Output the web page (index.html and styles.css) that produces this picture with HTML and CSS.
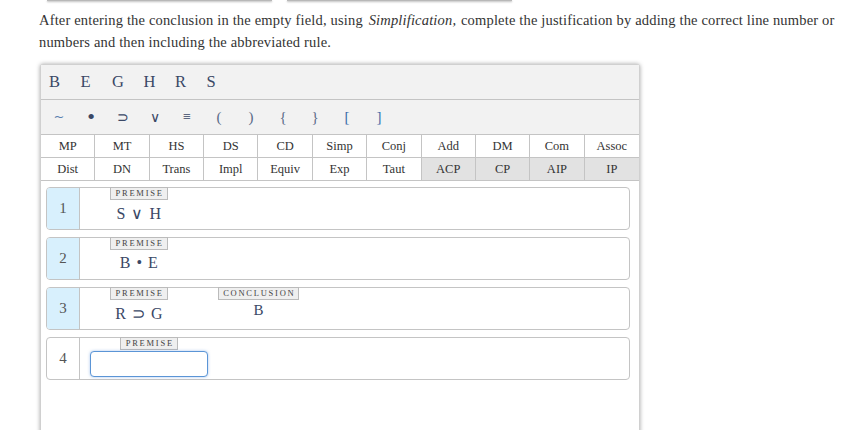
FILE: index.html
```html
<!DOCTYPE html>
<html>
<head>
<meta charset="utf-8">
<link rel="stylesheet" href="styles.css">
</head>
<body>
<div class="topbars"><div class="tb"></div><div class="tb"></div></div>
<p class="intro"><span>After entering the conclusion in the empty field, using </span><i>Simplification,</i><span> complete the justification by adding the correct line number or</span> <span>numbers and then including the abbreviated rule.</span></p>
<div class="panel">
  <div class="bar letters">
    <span>B</span><span>E</span><span>G</span><span>H</span><span>R</span><span>S</span>
  </div>
  <div class="bar symbols">
    <span class="tilde">~</span><span class="dot">•</span><span>⊃</span><span>∨</span><span>≡</span><span>(</span><span>)</span><span>{</span><span>}</span><span>[</span><span>]</span>
  </div>
  <div class="rules">
    <div>MP</div><div>MT</div><div>HS</div><div>DS</div><div>CD</div><div>Simp</div><div>Conj</div><div>Add</div><div>DM</div><div>Com</div><div>Assoc</div>
    <div>Dist</div><div>DN</div><div>Trans</div><div>Impl</div><div>Equiv</div><div>Exp</div><div>Taut</div><div class="g">ACP</div><div class="g">CP</div><div class="g">AIP</div><div class="g">IP</div>
  </div>
  <div class="lines">
    <div class="line">
      <div class="num done">1</div>
      <div class="col"><span class="tag">PREMISE</span><span class="f">S ∨ H</span></div>
    </div>
    <div class="line">
      <div class="num done">2</div>
      <div class="col"><span class="tag">PREMISE</span><span class="f">B • E</span></div>
    </div>
    <div class="line">
      <div class="num done">3</div>
      <div class="col"><span class="tag">PREMISE</span><span class="f">R ⊃ G</span></div>
      <div class="col concl"><span class="tag">CONCLUSION</span><span class="f">B</span></div>
    </div>
    <div class="line">
      <div class="num">4</div>
      <div class="col inputcol"><span class="tag">PREMISE</span><span class="input"></span></div>
    </div>
  </div>
</div>
</body>
</html>
```

FILE: styles.css
```css
html, body {
  margin: 0;
  padding: 0;
  background: #fff;
  overflow: hidden;
}
body {
  font-family: "Liberation Serif", "Times New Roman", serif;
  color: #333;
}
.topbars {
  display: flex;
  gap: 15px;
  padding-left: 47px;
  height: 2px;
}
.tb {
  width: 225px;
  height: 1px;
  background: #b8b8b8;
  box-shadow: 0 1px 2px rgba(0,0,0,0.35);
}
.intro {
  margin: 7px 0 0 39px;
  width: 800px;
  font-size: 14.5px;
  letter-spacing: 0.17px;
  line-height: 22px;
  color: #333;
}
.intro i { padding: 0 1px 0 2px; }
.panel {
  margin: 11px 0 0 40px;
  width: 598px;
  height: 420px;
  border: 1px solid #d0d0d0;
  border-radius: 3px;
  box-shadow: 0 0 4px rgba(0,0,0,0.35);
  background: #fff;
}
.bar {
  display: flex;
  align-items: center;
  background: #f2f2f2;
  border-bottom: 1px solid #c4c4c4;
  color: #3a4866;
  font-family: "Liberation Serif", serif;
}
.letters {
  height: 34px;
  font-size: 16.5px;
  padding-left: 8px;
}
.letters span {
  width: 31.5px;
}
.symbols {
  height: 34px;
  font-size: 14px;
  padding-left: 2px;
}
.symbols span {
  width: 32px;
  text-align: center;
}
.symbols .tilde { color: #5a7fb0; font-family: "DejaVu Sans", sans-serif; font-size: 13px; line-height: 20px; }
.symbols .dot { font-size: 22px; line-height: 20px; }
.symbols span:nth-child(6), .symbols span:nth-child(7),
.symbols span:nth-child(8), .symbols span:nth-child(9) { color: #5a6a88; font-size: 15px; }
.symbols span:nth-child(10), .symbols span:nth-child(11) { color: #3a6aa8; font-size: 15px; }
.rules {
  display: grid;
  grid-template-columns: repeat(11, 1fr);
  border-bottom: 1px solid #c4c4c4;
}
.rules div {
  height: 22px;
  line-height: 22px;
  text-align: center;
  font-size: 12.5px;
  color: #333;
  border-right: 1px solid #c4c4c4;
  background: #fff;
}
.rules div:nth-child(11n) { border-right: none; }
.rules div:nth-child(-n+11) { border-bottom: 1px solid #c4c4c4; }
.rules div.g { background: #e2e2e2; }
.lines {
  display: flex;
  flex-direction: column;
  gap: 7px;
  padding: 6px 9px 0 5px;
}
.line {
  display: flex;
  height: 41px;
  border: 1px solid #c4c4c4;
  border-radius: 4px;
}
.num {
  width: 32px;
  border-right: 1px solid #c4c4c4;
  display: flex;
  align-items: center;
  justify-content: center;
  font-size: 15px;
  color: #555;
  border-radius: 3px 0 0 3px;
}
.num.done { background: #d8f0fd; }
.col {
  display: flex;
  flex-direction: column;
  align-items: center;
  margin-left: 30px;
  margin-top: -1px;
}
.concl { margin-left: 50px; }
.inputcol { margin-left: 10px; }
.tag {
  display: block;
  font-size: 8.5px;
  letter-spacing: 1.75px;
  line-height: 11px;
  padding: 0 3px 0 4.5px;
  background: #efefef;
  border: 1px solid #bbb;
  color: #444;
}
.f {
  margin-top: 4px;
  font-size: 16px;
  color: #3a4866;
  word-spacing: 2px;
}
.concl .f { margin-top: 2px; font-size: 15px; }
.input {
  display: block;
  margin-top: 1px;
  width: 116px;
  height: 24px;
  border: 1px solid #5b95d6;
  border-radius: 4px;
  box-shadow: 0 0 3px rgba(80,140,220,0.5);
  background: #fff;
}
```
